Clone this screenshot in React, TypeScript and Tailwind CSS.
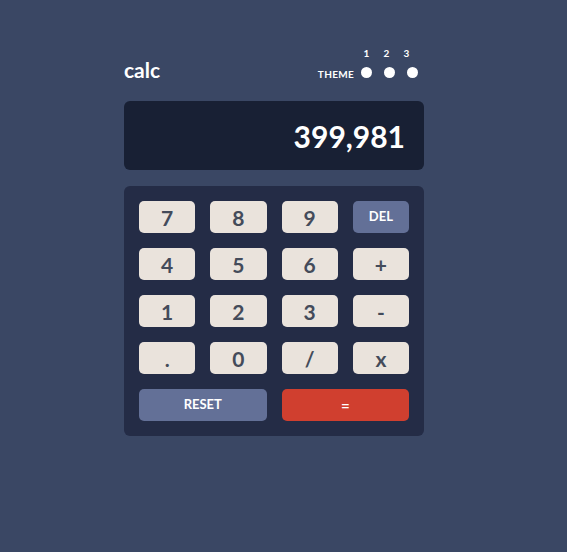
const keys = ['7', '8', '9', 'DEL', '4', '5', '6', '+', '1', '2', '3', '-', '.', '0', '/', 'x'];

function Key({ label }: { label: string }) {
  if (label === 'DEL') {
    return (
      <button className="h-[32px] rounded-[5px] bg-[#637097] text-[13px] font-bold text-white">
        DEL
      </button>
    );
  }
  return (
    <button className="h-[32px] rounded-[5px] bg-[#eae3dc] text-[21px] font-bold leading-none text-[#444b5a]">
      {label}
    </button>
  );
}

export default function App() {
  return (
    <div
      className="h-[552px] w-full bg-[#3a4764] pl-[124px] pt-[47px]"
      style={{ fontFamily: 'Lato, "Open Sans", sans-serif' }}
    >
      <div className="w-[300px]">
        {/* Header */}
        <div className="flex items-end justify-between">
          <h1 className="mb-[-2px] text-[21px] font-bold leading-none text-white">calc</h1>
          <div className="mr-[6px] flex items-end gap-[7px]">
            <span className="mb-[-1px] text-[10px] font-bold leading-none tracking-[0.3px] text-white">THEME</span>
            <div className="flex flex-col items-start gap-[8px]">
              <div className="flex gap-[9px] text-[10px] font-bold leading-[12px] text-white">
                <span className="w-[11px] text-center">1</span>
                <span className="w-[11px] text-center">2</span>
                <span className="w-[11px] text-center">3</span>
              </div>
              <div className="flex gap-[12px]">
                <span className="h-[11px] w-[11px] rounded-full bg-white" />
                <span className="h-[11px] w-[11px] rounded-full bg-white" />
                <span className="h-[11px] w-[11px] rounded-full bg-white" />
              </div>
            </div>
          </div>
        </div>

        {/* Display */}
        <div className="mt-[23px] flex h-[69px] items-center justify-end rounded-[6px] bg-[#182034] px-[19px]">
          <span className="text-[30px] font-bold leading-none text-white">399,981</span>
        </div>

        {/* Keypad */}
        <div className="mt-[16px] grid grid-cols-4 gap-[15px] rounded-[6px] bg-[#242c46] p-[15px]">
          {keys.map((k) => (
            <Key key={k} label={k} />
          ))}
          <button className="col-span-2 h-[32px] rounded-[5px] bg-[#637097] text-[13px] font-bold text-white">
            RESET
          </button>
          <button className="col-span-2 h-[32px] rounded-[5px] bg-[#d03f2f] text-[15px] font-bold text-white">
            =
          </button>
        </div>
      </div>
    </div>
  );
}
